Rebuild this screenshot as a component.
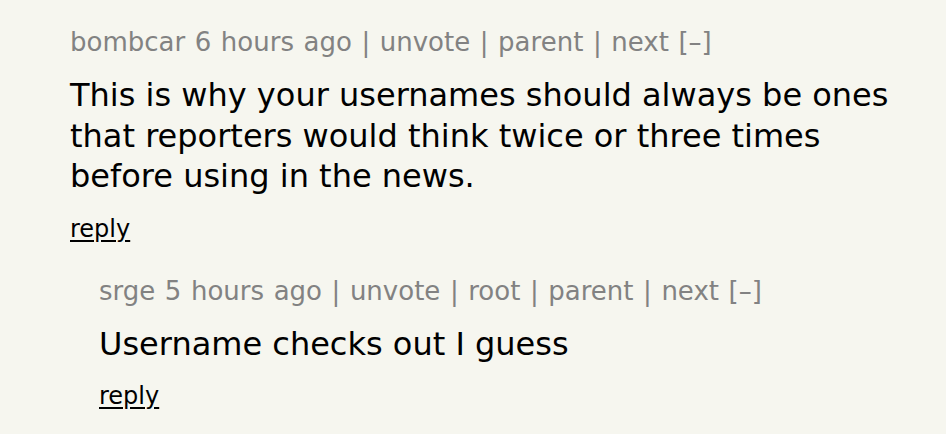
const font = "font-['Verdana','DejaVu_Sans',sans-serif]";

type CommentProps = {
  user: string;
  age: string;
  links: string[];
  text: string[];
  indent?: boolean;
};

function Comment({ user, age, links, text, indent }: CommentProps) {
  return (
    <div className={indent ? "pl-[29px] pt-[32px]" : ""}>
      <div className="text-[26px] leading-[31px] [word-spacing:1.3px] text-[#828282] whitespace-nowrap">
        {user} {age}
        {links.map((l) => (
          <span key={l}> | {l}</span>
        ))}{" "}
        [–]
      </div>
      <div className="mt-[17px] text-[32px] leading-[40.5px] text-black whitespace-nowrap">
        {text.map((t, i) => (
          <div key={i}>{t}</div>
        ))}
      </div>
      <div className="mt-[18px] text-[24px] leading-[29px]">
        <a href="#" className="text-black underline underline-offset-[3px]">
          reply
        </a>
      </div>
    </div>
  );
}

export default function App() {
  return (
    <div className={`min-h-screen bg-[#f6f6ef] ${font}`}>
      <div className="pl-[70px] pt-[27px]">
        <Comment
          user="bombcar"
          age="6 hours ago"
          links={["unvote", "parent", "next"]}
          text={[
            "This is why your usernames should always be ones",
            "that reporters would think twice or three times",
            "before using in the news.",
          ]}
        />
        <Comment
          indent
          user="srge"
          age="5 hours ago"
          links={["unvote", "root", "parent", "next"]}
          text={["Username checks out I guess"]}
        />
      </div>
    </div>
  );
}
